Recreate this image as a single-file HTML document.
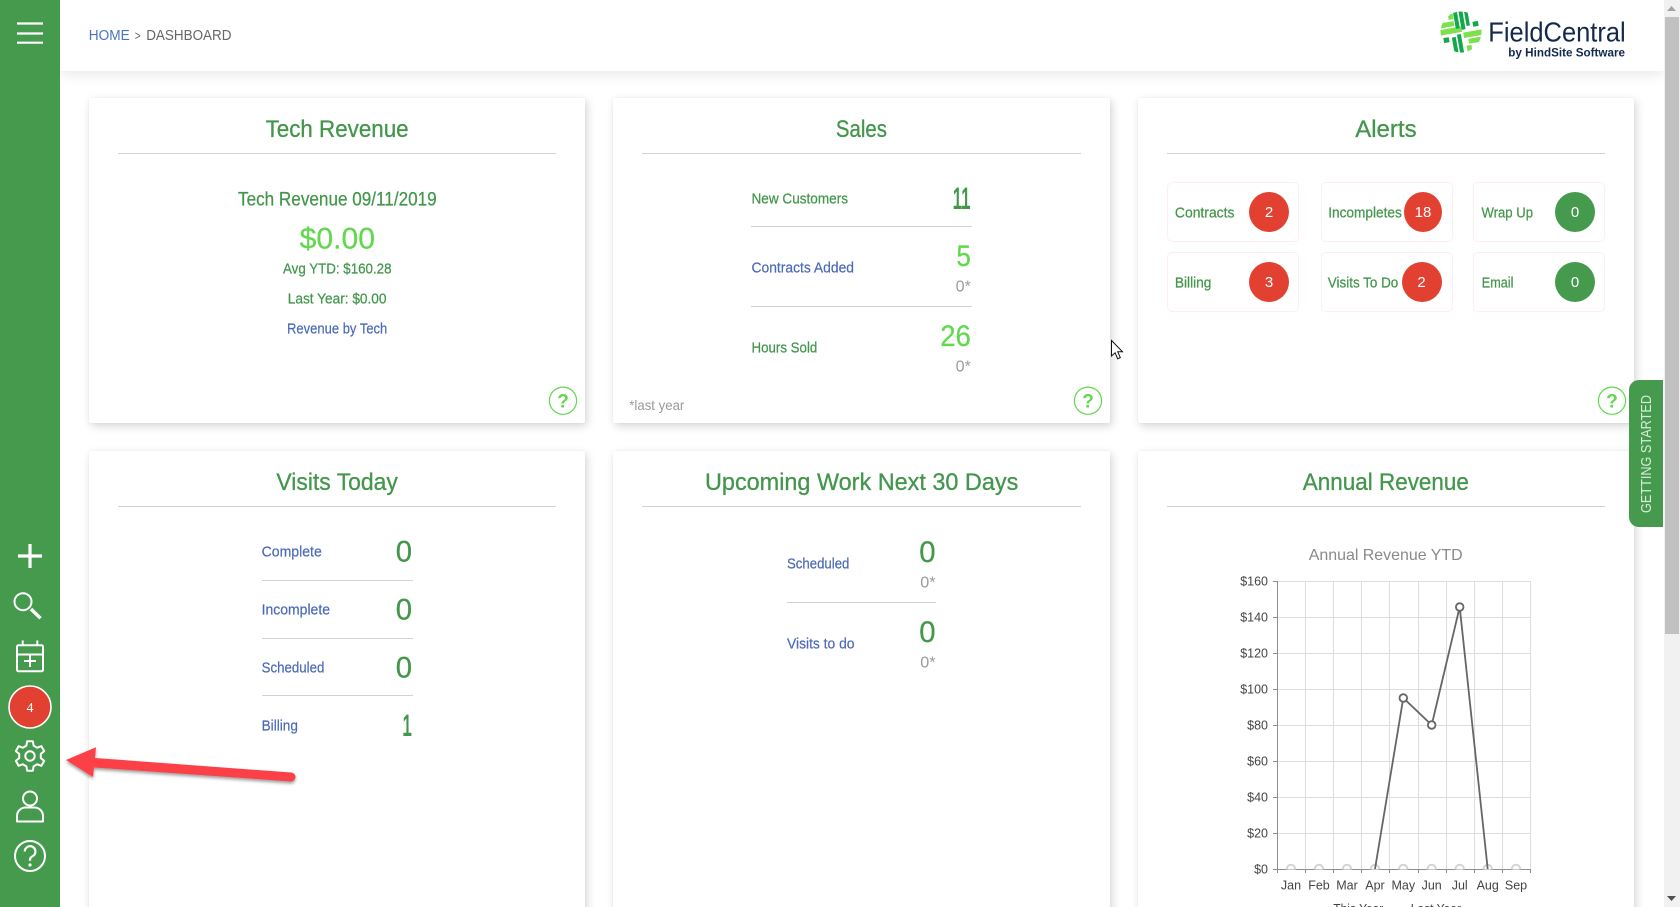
<!DOCTYPE html>
<html lang="en">
<head>
<meta charset="utf-8">
<title>Dashboard</title>
<style>
html,body{margin:0;padding:0;width:1680px;height:907px;overflow:hidden;background:#fff;font-family:"Liberation Sans",Arial,sans-serif}
#p{position:relative;width:1680px;height:907px;overflow:hidden;background:#fff}
.side{position:absolute;left:0;top:0;width:60px;height:907px;background:#469a4e;z-index:3}
.head{position:absolute;left:60px;top:0;width:1604px;height:71px;background:#fff;box-shadow:0 2px 14px rgba(0,0,0,.11);z-index:2}
.card{position:absolute;background:#fff;border-radius:2px;box-shadow:2px 3px 9px rgba(0,0,0,.17),0 0 2px rgba(0,0,0,.04)}
.tile{position:absolute;width:132px;height:60px;box-sizing:border-box;border:1px solid #fdeff1;border-radius:5px;background:#fff}
.sb{position:absolute;left:1664px;top:0;width:16px;height:907px;background:#f1f1f1;z-index:4}
.th{position:absolute;left:1px;top:17px;width:13.5px;height:617px;background:#c1c1c1}
.tab{position:absolute;left:1629px;top:380px;width:34px;height:147px;background:#469a4e;border-radius:10px 0 0 10px;z-index:5}
svg.o{position:absolute;left:0;top:0;z-index:6}
text{font-family:"Liberation Sans",Arial,sans-serif}
.h{font-size:24px;fill:#43964c;stroke:#43964c;stroke-width:.3px}
.g{fill:#43964c;stroke:#43964c;stroke-width:.25px}
.l{fill:#62d84e;stroke:#62d84e;stroke-width:.25px}
.b{fill:#4a69b8;stroke:#4a69b8;stroke-width:.2px}
.y{fill:#9a9a9a}
.s{font-size:15px}
.n{font-size:30px}
.one{stroke-width:1px}
.z{font-size:16px;fill:#9a9a9a}
.w{font-size:15px;fill:#fff;text-anchor:middle}
.ax{font-size:12.5px;fill:#444}
.dv{stroke:#d2d2d2;stroke-width:1}
.ic{fill:none;stroke:#fff;stroke-width:2;stroke-linecap:round;stroke-linejoin:round}
.gr{stroke:#dedede;stroke-width:1}
.tk{stroke:#8e8e8e;stroke-width:1}
</style>
</head>
<body>
<div id="p">
<div class="card" style="left:89px;top:98px;width:496px;height:325px"></div>
<div class="card" style="left:613px;top:98px;width:497px;height:325px"></div>
<div class="card" style="left:1138px;top:98px;width:496px;height:325px"></div>
<div class="card" style="left:89px;top:451px;width:496px;height:500px"></div>
<div class="card" style="left:613px;top:451px;width:497px;height:500px"></div>
<div class="card" style="left:1138px;top:451px;width:496px;height:500px"></div>
<div class="tile" style="left:1167px;top:182px"></div>
<div class="tile" style="left:1320.5px;top:182px"></div>
<div class="tile" style="left:1473px;top:182px"></div>
<div class="tile" style="left:1167px;top:252px"></div>
<div class="tile" style="left:1320.5px;top:252px"></div>
<div class="tile" style="left:1473px;top:252px"></div>
<div class="head"></div>
<div class="side"></div>
<div class="tab"></div>
<div class="sb"><div class="th"></div></div>

<svg class="o" width="1680" height="907" viewBox="0 0 1680 907" xmlns="http://www.w3.org/2000/svg">
<defs>
<clipPath id="cp"><rect x="1270" y="570" width="270" height="299.5"/></clipPath>
<clipPath id="lg"><circle cx="0" cy="0" r="20.5"/></clipPath>
<filter id="sh" x="-10%" y="-50%" width="120%" height="220%"><feDropShadow dx="0" dy="2" stdDeviation="1.5" flood-color="#000" flood-opacity=".4"/></filter>
</defs>

<!-- breadcrumb -->
<text x="88.8" y="40" font-size="15" fill="#4a74c0" textLength="41" lengthAdjust="spacingAndGlyphs">HOME</text>
<text x="134.7" y="40" font-size="13" fill="#666" textLength="6" lengthAdjust="spacingAndGlyphs">&gt;</text>
<text x="146.2" y="40" font-size="15" fill="#666" textLength="85.3" lengthAdjust="spacingAndGlyphs">DASHBOARD</text>

<!-- logo -->
<g transform="translate(1461 32) rotate(-10)">
<g clip-path="url(#lg)">
<g fill="#7fe04e">
<rect x="-21" y="-12" width="15.5" height="5"/><rect x="-21" y="-5.5" width="22" height="5.5"/>
<rect x="2" y="1" width="20" height="5.5"/><rect x="6" y="8" width="16" height="5"/>
<rect x="-10" y="-19.5" width="5" height="5.5"/><rect x="3" y="14.5" width="5" height="5.5"/>
</g>
<g fill="#13a84b">
<rect x="-4.5" y="-21" width="4" height="17"/><rect x="1" y="-21" width="4" height="19"/><rect x="6.5" y="-19" width="3.5" height="14"/>
<rect x="-10" y="4" width="4" height="16"/><rect x="-4.5" y="2" width="4" height="19"/>
<rect x="13" y="-8" width="5.5" height="5"/><rect x="-18.5" y="3" width="5.5" height="5"/>
</g>
</g>
</g>
<text x="1488.3" y="41.7" font-size="28" fill="#12294d" textLength="137.4" lengthAdjust="spacingAndGlyphs">FieldCentral</text>
<text x="1508.3" y="56.7" font-size="12" font-weight="bold" fill="#12294d" textLength="116.7" lengthAdjust="spacingAndGlyphs">by HindSite Software</text>

<!-- card titles -->
<text class="h" x="265.6" y="137" textLength="143" lengthAdjust="spacingAndGlyphs">Tech Revenue</text>
<text class="h" x="835.9" y="137" textLength="51" lengthAdjust="spacingAndGlyphs">Sales</text>
<text class="h" x="1355.2" y="137" textLength="61.4" lengthAdjust="spacingAndGlyphs">Alerts</text>
<text class="h" x="276.4" y="490" textLength="121.5" lengthAdjust="spacingAndGlyphs">Visits Today</text>
<text class="h" x="705" y="490" textLength="313.3" lengthAdjust="spacingAndGlyphs">Upcoming Work Next 30 Days</text>
<text class="h" x="1302.8" y="490" textLength="166.1" lengthAdjust="spacingAndGlyphs">Annual Revenue</text>
<g class="dv">
<line x1="118" y1="153.5" x2="556" y2="153.5"/><line x1="642" y1="153.5" x2="1081" y2="153.5"/><line x1="1167" y1="153.5" x2="1605" y2="153.5"/>
<line x1="118" y1="506.5" x2="556" y2="506.5"/><line x1="642" y1="506.5" x2="1081" y2="506.5"/><line x1="1167" y1="506.5" x2="1605" y2="506.5"/>
<line x1="751" y1="226.5" x2="972" y2="226.5"/><line x1="751" y1="306.5" x2="972" y2="306.5"/>
<line x1="262" y1="580.5" x2="413" y2="580.5"/><line x1="262" y1="638.5" x2="413" y2="638.5"/><line x1="262" y1="695.5" x2="413" y2="695.5"/>
<line x1="787" y1="602.5" x2="936" y2="602.5"/>
</g>

<!-- tech revenue -->
<text class="g" x="238" y="205.7" font-size="19" textLength="198.7" lengthAdjust="spacingAndGlyphs">Tech Revenue 09/11/2019</text>
<text class="l" x="299.7" y="248.5" font-size="30" textLength="75.3" lengthAdjust="spacingAndGlyphs">$0.00</text>
<text class="g s" x="283" y="273.3" textLength="108.5" lengthAdjust="spacingAndGlyphs">Avg YTD: $160.28</text>
<text class="g s" x="287.8" y="303.7" textLength="98.7" lengthAdjust="spacingAndGlyphs">Last Year: $0.00</text>
<text class="b s" x="287" y="333.7" textLength="100.3" lengthAdjust="spacingAndGlyphs">Revenue by Tech</text>

<!-- sales -->
<text class="g s" x="751.5" y="203.3" textLength="96.5" lengthAdjust="spacingAndGlyphs">New Customers</text>
<text class="g n one" x="952.6" y="208.5" textLength="18" lengthAdjust="spacingAndGlyphs">11</text>
<text class="b s" x="751.5" y="272.7" textLength="102.5" lengthAdjust="spacingAndGlyphs">Contracts Added</text>
<text class="l n" x="956.4" y="266" textLength="14.5" lengthAdjust="spacingAndGlyphs">5</text>
<text class="z" x="955.7" y="291.7" textLength="15.2" lengthAdjust="spacingAndGlyphs">0*</text>
<text class="g s" x="751.5" y="352.7" textLength="65.8" lengthAdjust="spacingAndGlyphs">Hours Sold</text>
<text class="l n" x="940.2" y="346.2" textLength="30.7" lengthAdjust="spacingAndGlyphs">26</text>
<text class="z" x="955.7" y="371.7" textLength="15.2" lengthAdjust="spacingAndGlyphs">0*</text>
<text class="y" x="629.3" y="410" font-size="14" textLength="55" lengthAdjust="spacingAndGlyphs">*last year</text>

<!-- alerts -->
<text class="g s" x="1174.9" y="217.3" textLength="59.6" lengthAdjust="spacingAndGlyphs">Contracts</text>
<text class="g s" x="1328.2" y="217.3" textLength="73.6" lengthAdjust="spacingAndGlyphs">Incompletes</text>
<text class="g s" x="1481.5" y="217.3" textLength="51.5" lengthAdjust="spacingAndGlyphs">Wrap Up</text>
<text class="g s" x="1174.9" y="287.3" textLength="36.5" lengthAdjust="spacingAndGlyphs">Billing</text>
<text class="g s" x="1327.8" y="287.3" textLength="70.5" lengthAdjust="spacingAndGlyphs">Visits To Do</text>
<text class="g s" x="1481.8" y="287.3" textLength="31.6" lengthAdjust="spacingAndGlyphs">Email</text>
<circle cx="1269" cy="212" r="20" fill="#e24132"/><text class="w" x="1269" y="217">2</text>
<ellipse cx="1423" cy="212" rx="19" ry="20" fill="#e24132"/><text class="w" x="1423" y="217">18</text>
<circle cx="1575" cy="212" r="20" fill="#469a4e"/><text class="w" x="1575" y="217">0</text>
<circle cx="1269" cy="282" r="20" fill="#e24132"/><text class="w" x="1269" y="287">3</text>
<circle cx="1422" cy="282" r="20" fill="#e24132"/><text class="w" x="1421.5" y="287">2</text>
<circle cx="1575" cy="282" r="20" fill="#469a4e"/><text class="w" x="1575" y="287">0</text>

<!-- help bubbles -->
<g fill="#fff" stroke="#62d84e" stroke-width="1.2">
<circle cx="563" cy="400.7" r="13.6"/><circle cx="1088" cy="400.7" r="13.6"/><circle cx="1612" cy="400.7" r="13.6"/>
</g>
<g font-size="19" font-weight="bold" fill="#62d84e" text-anchor="middle">
<text x="563" y="407.5">?</text><text x="1088" y="407.5">?</text><text x="1612" y="407.5">?</text>
</g>

<!-- visits today -->
<text class="b s" x="261.6" y="556.5" textLength="60.2" lengthAdjust="spacingAndGlyphs">Complete</text>
<text class="b s" x="261.6" y="614.5" textLength="68.4" lengthAdjust="spacingAndGlyphs">Incomplete</text>
<text class="b s" x="261.6" y="672.5" textLength="62.8" lengthAdjust="spacingAndGlyphs">Scheduled</text>
<text class="b s" x="261.6" y="730.5" textLength="36.3" lengthAdjust="spacingAndGlyphs">Billing</text>
<text class="g n" x="395.8" y="561.5" textLength="16.3" lengthAdjust="spacingAndGlyphs">0</text>
<text class="g n" x="395.8" y="619.5" textLength="16.3" lengthAdjust="spacingAndGlyphs">0</text>
<text class="g n" x="395.8" y="677.5" textLength="16.3" lengthAdjust="spacingAndGlyphs">0</text>
<text class="g n one" x="402.4" y="735.5" textLength="9.6" lengthAdjust="spacingAndGlyphs">1</text>

<!-- upcoming -->
<text class="b s" x="787" y="568.5" textLength="62.4" lengthAdjust="spacingAndGlyphs">Scheduled</text>
<text class="g n" x="919.3" y="562" textLength="16.3" lengthAdjust="spacingAndGlyphs">0</text>
<text class="z" x="920.3" y="587.7" textLength="15.3" lengthAdjust="spacingAndGlyphs">0*</text>
<text class="b s" x="787" y="648.5" textLength="67.5" lengthAdjust="spacingAndGlyphs">Visits to do</text>
<text class="g n" x="919.3" y="642" textLength="16.3" lengthAdjust="spacingAndGlyphs">0</text>
<text class="z" x="920.3" y="667.5" textLength="15.3" lengthAdjust="spacingAndGlyphs">0*</text>

<!-- chart -->
<text x="1308.7" y="560" font-size="16" fill="#8a8a8a" textLength="154" lengthAdjust="spacingAndGlyphs">Annual Revenue YTD</text>
<g class="gr">
<line x1="1278" y1="581.5" x2="1531" y2="581.5"/><line x1="1278" y1="617.5" x2="1531" y2="617.5"/><line x1="1278" y1="653.5" x2="1531" y2="653.5"/><line x1="1278" y1="689.5" x2="1531" y2="689.5"/><line x1="1278" y1="725.5" x2="1531" y2="725.5"/><line x1="1278" y1="761.5" x2="1531" y2="761.5"/><line x1="1278" y1="797.5" x2="1531" y2="797.5"/><line x1="1278" y1="833.5" x2="1531" y2="833.5"/>
<line x1="1305.5" y1="582" x2="1305.5" y2="869"/><line x1="1333.5" y1="582" x2="1333.5" y2="869"/><line x1="1361.5" y1="582" x2="1361.5" y2="869"/><line x1="1389.5" y1="582" x2="1389.5" y2="869"/><line x1="1418.5" y1="582" x2="1418.5" y2="869"/><line x1="1446.5" y1="582" x2="1446.5" y2="869"/><line x1="1474.5" y1="582" x2="1474.5" y2="869"/><line x1="1502.5" y1="582" x2="1502.5" y2="869"/><line x1="1530.5" y1="582" x2="1530.5" y2="869"/>
</g>
<g class="tk">
<line x1="1277.5" y1="581" x2="1277.5" y2="873"/><line x1="1273" y1="869.5" x2="1531" y2="869.5"/>
<line x1="1273" y1="581.5" x2="1278" y2="581.5"/><line x1="1273" y1="617.5" x2="1278" y2="617.5"/><line x1="1273" y1="653.5" x2="1278" y2="653.5"/><line x1="1273" y1="689.5" x2="1278" y2="689.5"/><line x1="1273" y1="725.5" x2="1278" y2="725.5"/><line x1="1273" y1="761.5" x2="1278" y2="761.5"/><line x1="1273" y1="797.5" x2="1278" y2="797.5"/><line x1="1273" y1="833.5" x2="1278" y2="833.5"/>
<line x1="1305.5" y1="869" x2="1305.5" y2="873"/><line x1="1333.5" y1="869" x2="1333.5" y2="873"/><line x1="1361.5" y1="869" x2="1361.5" y2="873"/><line x1="1389.5" y1="869" x2="1389.5" y2="873"/><line x1="1418.5" y1="869" x2="1418.5" y2="873"/><line x1="1446.5" y1="869" x2="1446.5" y2="873"/><line x1="1474.5" y1="869" x2="1474.5" y2="873"/><line x1="1502.5" y1="869" x2="1502.5" y2="873"/><line x1="1530.5" y1="869" x2="1530.5" y2="873"/>
</g>
<g class="ax" text-anchor="end">
<text x="1268" y="585.5">$160</text><text x="1268" y="621.5">$140</text><text x="1268" y="657.5">$120</text><text x="1268" y="693.5">$100</text><text x="1268" y="729.5">$80</text><text x="1268" y="765.5">$60</text><text x="1268" y="801.5">$40</text><text x="1268" y="837.5">$20</text><text x="1268" y="873.5">$0</text>
</g>
<g class="ax" text-anchor="middle">
<text x="1291" y="889.3">Jan</text><text x="1319" y="889.3">Feb</text><text x="1347" y="889.3">Mar</text><text x="1375" y="889.3">Apr</text><text x="1403.3" y="889.3">May</text><text x="1431.7" y="889.3">Jun</text><text x="1459.7" y="889.3">Jul</text><text x="1487.7" y="889.3">Aug</text><text x="1516" y="889.3">Sep</text>
</g>
<g clip-path="url(#cp)">
<g fill="#fff" stroke="#d4d4d4" stroke-width="2">
<circle cx="1291" cy="869" r="4.2"/><circle cx="1319" cy="869" r="4.2"/><circle cx="1347" cy="869" r="4.2"/><circle cx="1375" cy="869" r="4.2"/><circle cx="1403.3" cy="869" r="4.2"/><circle cx="1431.7" cy="869" r="4.2"/><circle cx="1459.7" cy="869" r="4.2"/><circle cx="1487.7" cy="869" r="4.2"/><circle cx="1516" cy="869" r="4.2"/>
</g>
<polyline points="1375,869 1403.3,698 1431.7,725 1459.7,607 1487.7,869" fill="none" stroke="#666" stroke-width="1.8"/>
</g>
<g fill="#fff" stroke="#666" stroke-width="1.8">
<circle cx="1403.3" cy="698" r="3.8"/><circle cx="1431.7" cy="725" r="3.8"/><circle cx="1459.7" cy="607" r="3.8"/>
</g>
<text class="ax" x="1333.3" y="913" textLength="50" lengthAdjust="spacingAndGlyphs">This Year</text>
<text class="ax" x="1410.7" y="913" textLength="50.3" lengthAdjust="spacingAndGlyphs">Last Year</text>

<!-- getting started -->
<text transform="translate(1651 513) rotate(-90)" font-size="15" fill="#d6ecd7" textLength="118" lengthAdjust="spacingAndGlyphs">GETTING STARTED</text>

<!-- scrollbar arrows -->
<path d="M1671.5 6l4.5 5h-9z" fill="#a3a3a3"/>
<path d="M1671.5 901l-4.5-5h9z" fill="#505050"/>

<!-- cursor -->
<path d="M1111.5 340.5V356l3.6-3.2 2.6 6 2.6-1.2-2.6-5.8h4.8z" fill="#fff" stroke="#111" stroke-width="1" stroke-linejoin="miter"/>

<!-- sidebar icons -->
<g stroke="#fff" stroke-width="2.2" stroke-linecap="butt">
<line x1="17" y1="23.5" x2="43" y2="23.5"/><line x1="17" y1="33.5" x2="43" y2="33.5"/><line x1="17" y1="42.7" x2="43" y2="42.7"/>
</g>
<g class="ic">
<path d="M18 556H42M30 544V568" stroke-width="3.2" stroke-linecap="butt"/>
<circle cx="23" cy="601.7" r="8.5" stroke-width="2"/>
<path d="M31 609L40.5 618.3" stroke-width="3.4" stroke-linecap="butt"/>
<rect x="17" y="645.3" width="26" height="26" rx="1.5"/>
<path d="M17 654.5H43M22.7 640.5V645M37.3 640.5V645M24 661H36M30 655.5V667" stroke-linecap="butt"/>
<g transform="translate(30 756)">
<path d="M-3.58-10.4L-2.86-14.72H2.86L3.58-10.4L7.22-8.3L11.32-9.84L14.18-4.88L10.8-2.1V2.1L14.18 4.88L11.32 9.84L7.22 8.3L3.58 10.4L2.86 14.72H-2.86L-3.58 10.4L-7.22 8.3L-11.32 9.84L-14.18 4.88L-10.8 2.1V-2.1L-14.18-4.88L-11.32-9.84L-7.22-8.3Z"/>
<circle cx="0" cy="0" r="4.7"/>
</g>
<circle cx="30" cy="798.5" r="7"/>
<path d="M17 821.5V816a8.5 8.5 0 0 1 8.5-8.5H34.5a8.5 8.5 0 0 1 8.5 8.5V821.5Z"/>
<circle cx="30" cy="856" r="15"/>
<path d="M24.8 851.5a5.3 5.3 0 1 1 8.1 4.5c-2 1.2-2.9 2-2.9 4v.8" stroke-width="2.2" stroke-linecap="butt"/>
</g>
<circle cx="30" cy="865" r="1.6" fill="#fff"/>
<circle cx="30" cy="707" r="21" fill="#e24132" stroke="#fff" stroke-width="1.6"/>
<text x="30" y="712" font-size="14" fill="#fff" text-anchor="middle" style="font-family:'Liberation Serif',serif">4</text>

<!-- annotation arrow -->
<path d="M66 760L96 747.3L95 758L291 772.5A4.5 4.5 0 0 1 291 781.5L94 767.5L93 777Z" fill="#fb4147" filter="url(#sh)"/>
</svg>
</div>
</body>
</html>
